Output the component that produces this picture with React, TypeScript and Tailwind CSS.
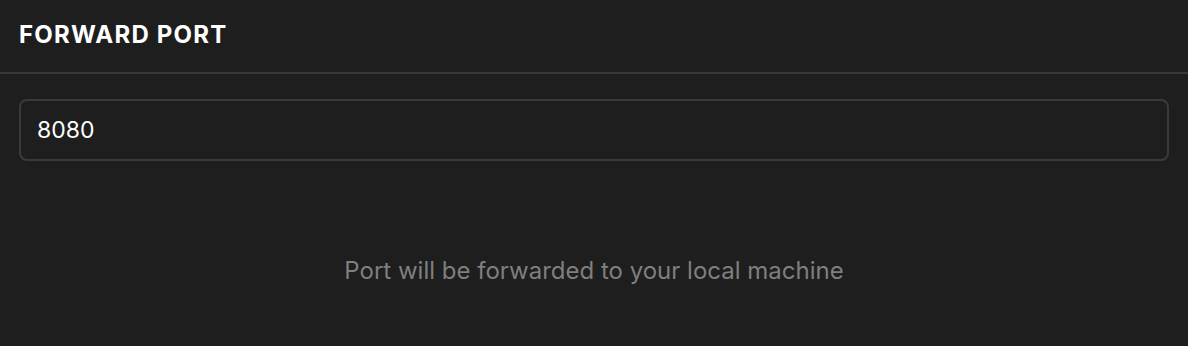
export default function App() {
  return (
    <div
      className="w-[1188px] h-[346px] bg-[#1e1e1e] flex flex-col"
      style={{ fontFamily: "Inter, 'Noto Sans', sans-serif" }}
    >
      <div className="h-[74px] flex items-center px-[19px] border-b-2 border-[#373737]">
        <h1 className="text-[24px] font-bold tracking-[0.05em] text-white -mt-[2px]">FORWARD PORT</h1>
      </div>
      <div className="px-[19px] pt-[25px]">
        <input
          defaultValue="8080"
          className="w-full h-[62px] rounded-[8px] border-2 border-[#3a3a3a] bg-[#1e1e1e] px-[16px] text-[23px] text-white outline-none"
        />
      </div>
      <p className="mt-[92px] text-center text-[24px] text-[#7f7f7f]">
        Port will be forwarded to your local machine
      </p>
    </div>
  );
}
